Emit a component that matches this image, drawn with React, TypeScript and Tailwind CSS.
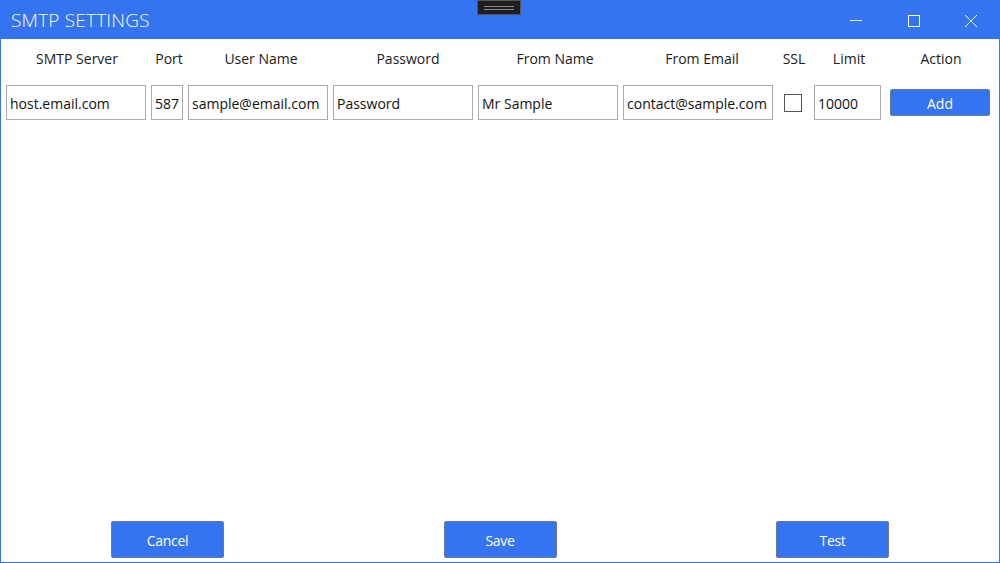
import React from 'react';

const font = { fontFamily: '"Open Sans", "Noto Sans", sans-serif' };

const headers: [string, string][] = [
    ['SMTP Server', 'w-[142px]'],
    ['Port', 'w-[42px]'],
    ['User Name', 'w-[142px]'],
    ['Password', 'w-[152px]'],
    ['From Name', 'w-[142px]'],
    ['From Email', 'w-[152px]'],
    ['SSL', 'w-[32px]'],
    ['Limit', 'w-[78px]'],
    ['Action', 'w-[106px]'],
];

const Field = ({ value, className }: { value: string; className: string }) => (
    <input
        readOnly
        value={value}
        className={`h-[35px] border border-[#ababab] bg-white px-[3px] pt-[2px] text-[14px] text-[#111] outline-none ${className}`}
    />
);

const FooterButton = ({ label }: { label: string }) => (
    <button className="h-[37px] w-[113px] rounded-[2px] border border-[#6b7a99] bg-[#3574f0] pt-[2px] text-[14px] tracking-[-0.3px] text-white">
        {label}
    </button>
);

export default function App() {
    return (
        <div
            className="flex h-[563px] w-[1000px] flex-col border-x border-b border-[#3574f0] bg-white"
            style={font}
        >
            {/* Title bar */}
            <div className="relative flex h-[39px] shrink-0 items-center bg-[#3574f0] pl-[11px] pt-[2px] text-white -mx-px">
                <span className="text-[19px] font-light tracking-[0.2px]">SMTP SETTINGS</span>
                <div className="absolute left-[477px] top-0 flex h-[15px] w-[44px] flex-col items-center justify-center gap-[2px] border border-[#555] bg-[#1e1e1e]">
                    <div className="h-px w-[30px] bg-[#888]" />
                    <div className="h-px w-[30px] bg-[#888]" />
                </div>
                <div className="ml-auto flex items-center">
                    <div className="flex w-[58px] justify-center">
                        <div className="h-px w-[12px] bg-white" />
                    </div>
                    <div className="flex w-[57px] justify-center">
                        <div className="h-[12px] w-[12px] border border-white" />
                    </div>
                    <div className="flex w-[58px] justify-center">
                        <svg width="14" height="14" viewBox="0 0 14 14" stroke="white" strokeWidth="1">
                            <path d="M1 1 L13 13 M13 1 L1 13" />
                        </svg>
                    </div>
                </div>
            </div>

            {/* Column headers */}
            <div className="mt-[8px] flex pl-[5px] text-[14px] text-[#1a1a1a]">
                {headers.map(([label, w]) => (
                    <div key={label} className={`${w} text-center leading-[24px]`}>
                        {label}
                    </div>
                ))}
            </div>

            {/* Input row */}
            <div className="mt-[14px] flex items-center gap-[5px] pl-[5px]">
                <Field value="host.email.com" className="w-[140px]" />
                <Field value="587" className="w-[32px]" />
                <Field value="sample@email.com" className="w-[140px]" />
                <Field value="Password" className="w-[140px]" />
                <Field value="Mr Sample" className="w-[140px]" />
                <Field value="contact@sample.com" className="w-[150px]" />
                <div className="ml-[6px] h-[18px] w-[18px] border border-[#555] bg-white" />
                <Field value="10000" className="ml-[7px] w-[67px]" />
                <button className="ml-[4px] h-[27px] w-[100px] rounded-[2px] border border-[#6b7a99] bg-[#3574f0] pt-[1px] text-[14px] text-white">
                    Add
                </button>
            </div>

            <div className="flex-1" />

            {/* Footer */}
            <div className="mb-[4px] flex justify-between pl-[110px] pr-[110px]">
                <FooterButton label="Cancel" />
                <FooterButton label="Save" />
                <FooterButton label="Test" />
            </div>
        </div>
    );
}
